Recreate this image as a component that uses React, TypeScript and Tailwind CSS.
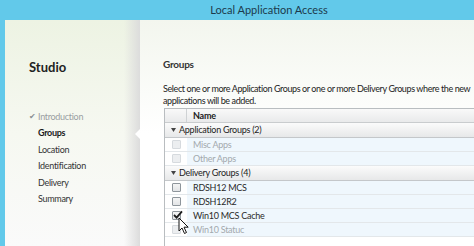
import React from 'react'

type Row = { name: string; checked?: boolean; disabled?: boolean }

const appGroups: Row[] = [
  { name: 'Misc Apps', disabled: true },
  { name: 'Other Apps', disabled: true },
]

const deliveryGroups: Row[] = [
  { name: 'RDSH12 MCS' },
  { name: 'RDSH12R2' },
  { name: 'Win10 MCS Cache', checked: true },
  { name: 'Win10 Statuc', disabled: true },
]

const steps = ['Introduction', 'Groups', 'Location', 'Identification', 'Delivery', 'Summary']

function Checkbox({ checked, disabled }: { checked?: boolean; disabled?: boolean }) {
  return (
    <span
      className={`relative flex h-[9px] w-[9px] items-center justify-center rounded-[1px] border ${
        disabled ? 'border-[#d6dade] bg-[#eceef0]' : 'border-[#8e959b] bg-gradient-to-b from-[#f4f4f4] to-[#e2e4e6]'
      }`}
    >
      {checked && (
        <svg width="10" height="9" viewBox="0 0 10 9" className="absolute -top-[2px] left-0">
          <path d="M1 5 L3.6 7.6 L9 1.4" fill="none" stroke="#1c1c1c" strokeWidth="1.8" />
        </svg>
      )}
    </span>
  )
}

function GroupHeader({ label }: { label: string }) {
  return (
    <div className="flex h-[15px] items-center border-b border-[#c4c7ca] bg-gradient-to-b from-[#fbfbfb] to-[#e7e8e9] pl-[6px] text-[#222]">
      <svg width="5" height="4" viewBox="0 0 5 4" className="mr-[3px]">
        <path d="M0 0 L5 0 L2.5 4 Z" fill="#444" />
      </svg>
      <span>{label}</span>
    </div>
  )
}

function ItemRow({ row }: { row: Row }) {
  return (
    <div className="flex h-[14px] border-b border-[#e3e7ea]">
      <div className="flex w-[22px] shrink-0 items-center bg-white pl-[7px]">
        <Checkbox checked={row.checked} disabled={row.disabled} />
      </div>
      <div
        className={`flex flex-1 items-center bg-[#eff7fd] pl-[6px] ${
          row.disabled ? 'text-[#a3a9ad]' : 'text-[#2a2a2a]'
        }`}
      >
        {row.name}
      </div>
    </div>
  )
}

export default function App() {
  return (
    <div
      className="flex h-[246px] w-[474px] flex-col overflow-hidden bg-[#62c9ea]"
      style={{ fontFamily: 'Lato, "Open Sans", sans-serif' }}
    >
      <div className="flex h-[20px] shrink-0 items-center justify-center pl-[64px] text-[11px] text-[#1c3a4c]">
        Local Application Access
      </div>
      <div className="ml-[5px] flex min-h-0 flex-1">
        <aside className="relative w-[135px] shrink-0 bg-gradient-to-b from-[#edf3e3] via-[#f6f8f1] to-[#fafafa] pl-[24px] pt-[38px]">
          <div className="pointer-events-none absolute inset-y-0 right-0 w-[16px] bg-gradient-to-r from-transparent to-[#dcdcdc]" />
          <div className="text-[13px] font-bold leading-[18px] text-[#222]">Studio</div>
          <ul className="mt-[32px] text-[9px] tracking-[-0.3px]">
            {steps.map((s, i) => (
              <li key={s} className="relative flex h-[16.5px] items-center pl-[9px]">
                {i === 0 && <span className="absolute left-0 text-[8px] text-[#8a8f93]">✔</span>}
                <span
                  className={
                    i === 0 ? 'text-[#9a9ea2]' : i === 1 ? 'font-bold text-[#1a1a1a]' : 'text-[#333]'
                  }
                >
                  {s}
                </span>
              </li>
            ))}
          </ul>
          <div className="absolute right-0 top-[109px] h-0 w-0 border-y-[5px] border-r-[5px] border-y-transparent border-r-white" />
        </aside>
        <main className="min-w-0 flex-1 overflow-hidden bg-gradient-to-b from-[#f3f6ee] via-white to-white pl-[23px] pt-[37px] text-[9px] tracking-[-0.25px]">
          <div className="text-[10px] font-bold leading-[14px] text-[#333]">Groups</div>
          <p className="mt-[12px] whitespace-nowrap leading-[12px] tracking-[-0.4px] text-[#222]">
            Select one or more Application Groups or one or more Delivery Groups where the new
            <br />
            applications will be added.
          </p>
          <div className="relative ml-[1px] mt-[1px] h-[200px] border-l border-t border-[#b9bdc0]">
            <div className="flex h-[14px] border-b border-[#c9ccce] bg-gradient-to-b from-[#f9f9f9] to-[#e9eaeb]">
              <div className="w-[22px] shrink-0 border-r border-[#cfd2d4]" />
              <div className="flex items-center pl-[6px] font-bold text-[#222]">Name</div>
            </div>
            <GroupHeader label="Application Groups (2)" />
            {appGroups.map((r) => (
              <ItemRow key={r.name} row={r} />
            ))}
            <GroupHeader label="Delivery Groups (4)" />
            {deliveryGroups.map((r) => (
              <ItemRow key={r.name} row={r} />
            ))}
            <svg
              width="12"
              height="18"
              viewBox="0 0 12 18"
              className="absolute left-[13px] top-[108px]"
            >
              <path
                d="M1 1 L1 14 L4 11 L6.5 16.5 L8.5 15.5 L6 10.2 L10.2 10.2 Z"
                fill="white"
                stroke="#111"
                strokeWidth="1"
                strokeLinejoin="round"
              />
            </svg>
          </div>
        </main>
      </div>
    </div>
  )
}
